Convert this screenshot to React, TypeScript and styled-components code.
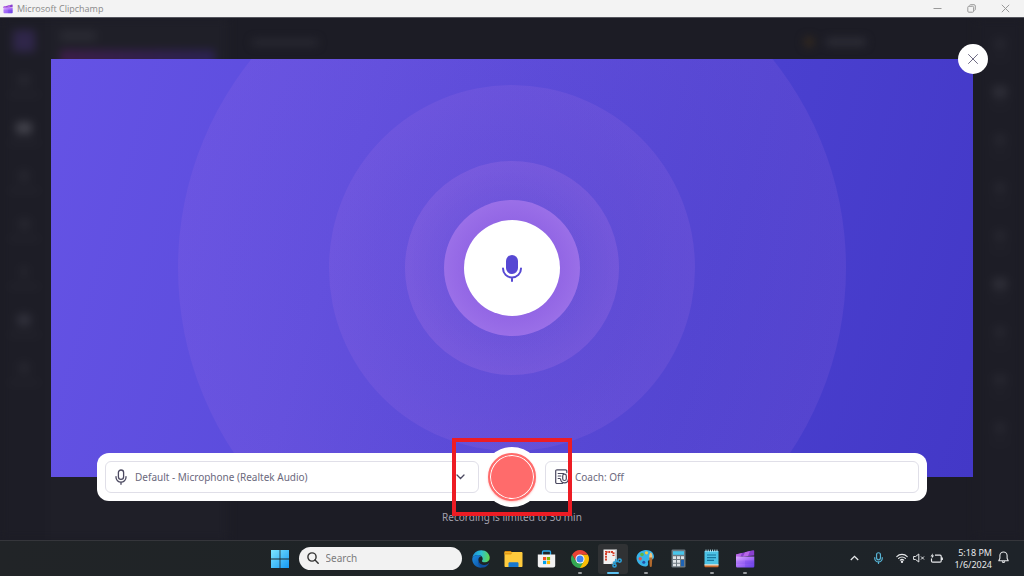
import React from "react";
import styled, { createGlobalStyle } from "styled-components";

const GlobalStyle = createGlobalStyle`
  *, *::before, *::after { box-sizing: border-box; }
  body { margin: 0; background: #1d1d26; }
  body, button, input, select { font-family: "Noto Sans", "Open Sans", sans-serif; }
  button { border: 0; padding: 0; background: none; cursor: pointer; }
  svg { display: block; }
`;

const Page = styled.div`
  min-height: 100vh;
  display: grid;
  grid-template-rows: auto 1fr auto;
`;

/* Title bar */

const TitleBar = styled.header`
  height: 18px;
  padding: 0 2px 0 3px;
  display: flex;
  align-items: center;
  gap: 4px;
  background: #f3f3f3;
  border-bottom: 1px solid #55565e;
`;

const AppName = styled.h1`
  margin: 0;
  flex: 1;
  font-family: "Open Sans", "Noto Sans", sans-serif;
  font-size: 9px;
  line-height: 16px;
  font-weight: 400;
  color: #8a8a8a;
`;

const WindowControls = styled.div`
  display: flex;
`;

const WindowButton = styled.button`
  width: 34px;
  height: 16px;
  display: grid;
  place-items: center;
  color: #999;
`;

/* Dimmed editor behind the dialog */

const Workspace = styled.div`
  display: grid;
  grid-template: minmax(0, 1fr) / minmax(0, 1fr);
  background: #1c1c25;
  overflow: hidden;
`;

const Editor = styled.div`
  grid-area: 1 / 1;
  display: grid;
  grid-template-columns: 48px 180px 1fr 48px;
  filter: blur(4px);
`;

const Rail = styled.div`
  padding-top: 12px;
  display: flex;
  flex-direction: column;
  align-items: center;
  background: #1d1d26;
`;

const RailItems = styled.div<{ $top?: number }>`
  padding-top: ${(p) => p.$top ?? 0}px;
`;

const RailItem = styled.div`
  height: 48px;
  padding-top: 8px;
  display: flex;
  flex-direction: column;
  align-items: center;
  gap: 6px;
`;

const Blob = styled.div<{ $w: number; $h: number; $c?: string }>`
  width: ${(p) => p.$w}px;
  height: ${(p) => p.$h}px;
  border-radius: 3px;
  background: ${(p) => p.$c ?? "#25252e"};
`;

const EditorPanel = styled.div`
  padding: 13px 12px;
  display: flex;
  flex-direction: column;
  gap: 9px;
  background: #1f1f28;
`;

const EditorTop = styled.div`
  height: 48px;
  padding: 0 110px 0 24px;
  display: flex;
  align-items: center;
  gap: 12px;
`;

const Spacer = styled.div`
  flex: 1;
`;

/* Recording dialog */

const Recorder = styled.main`
  grid-area: 1 / 1;
  z-index: 1;
  padding: 41px 51px 0;
  display: flex;
  flex-direction: column;
`;

const Stage = styled.section`
  position: relative;
  flex: 1;
  min-height: 240px;
  display: grid;
  place-items: center;
  background: linear-gradient(106deg, #6553e5 0%, #5b4cdc 32%, #4a40cf 70%, #4338c7 100%);
`;

const Rings = styled.svg`
  position: absolute;
  inset: 0;
  width: 100%;
  height: 100%;
`;

const MicBadge = styled.div`
  position: relative;
  width: 96px;
  height: 96px;
  border-radius: 50%;
  display: grid;
  place-items: center;
  background: #fff;
  color: #5648d3;
`;

const CloseButton = styled.button`
  position: absolute;
  top: -15px;
  right: -15px;
  width: 30px;
  height: 30px;
  border-radius: 50%;
  display: grid;
  place-items: center;
  background: #fff;
  color: #6f6c84;
`;

const ControlBar = styled.form`
  position: relative;
  z-index: 1;
  margin: -24px 46px 0;
  padding: 8px;
  display: flex;
  align-items: center;
  background: #fff;
  border-radius: 12px;
`;

const Field = styled.div<{ $gap: number }>`
  flex: 1;
  min-width: 0;
  height: 32px;
  padding: 0 13px 0 9px;
  display: flex;
  align-items: center;
  gap: ${(p) => p.$gap}px;
  border: 1px solid #e0dfe8;
  border-radius: 6px;
  color: #4b4960;
`;

const DeviceSelect = styled.select`
  flex: 1;
  min-width: 0;
  height: 30px;
  padding: 0;
  border: 0;
  appearance: none;
  background: none;
  font-size: 10px;
  color: #6b697d;
`;

const CoachButton = styled.button`
  flex: 1;
  height: 30px;
  text-align: left;
  font-size: 10px;
  color: #6b697d;
`;

const RecordSlot = styled.div`
  position: relative;
  width: 60px;
  height: 60px;
  margin: -14px 3px;
  border-radius: 50%;
  display: grid;
  place-items: center;
  background: #fff;
`;

const RecordButton = styled.button`
  width: 48px;
  height: 48px;
  border: 2px solid #ff6b6b;
  border-radius: 50%;
  background: #ff6b6b;
  box-shadow: inset 0 0 0 1px #fff, 0 1px 2px #ff6b6b66;
`;

const Highlight = styled.div`
  position: absolute;
  inset: -9px -30px;
  border: 4px solid #ed1c24;
  pointer-events: none;
`;

const Hint = styled.p`
  margin: 9px 0 16px;
  text-align: center;
  font-size: 10px;
  line-height: 14px;
  color: #a3a1ad;
`;

/* Taskbar */

const Taskbar = styled.footer`
  height: 36px;
  display: grid;
  grid-template-columns: 1fr auto 1fr;
  align-items: center;
  background: linear-gradient(90deg, #212427, #1e2426 50%, #1e2329);
  border-top: 1px solid #35363b;
`;

const Dock = styled.nav`
  grid-column: 2;
  display: flex;
  align-items: center;
  gap: 4px;
`;

const Apps = styled.div`
  display: flex;
  gap: 3px;
`;

const AppButton = styled.button<{ $state?: "open" | "active" }>`
  position: relative;
  width: 30px;
  height: 30px;
  display: grid;
  place-items: center;
  border-radius: 3px;
  background: ${(p) => (p.$state === "active" ? "#303234" : "none")};

  &::after {
    content: "";
    position: absolute;
    bottom: 0;
    left: 50%;
    transform: translateX(-50%);
    height: 2px;
    border-radius: 1px;
    width: ${(p) => (p.$state === "active" ? 12 : p.$state ? 4 : 0)}px;
    background: ${(p) => (p.$state === "active" ? "#5bc0f0" : "#9a9da0")};
  }
`;

const SearchBox = styled.label`
  width: 163px;
  height: 23px;
  padding: 0 8px 1px;
  display: flex;
  align-items: center;
  gap: 7px;
  border-radius: 12px;
  background: #f2f2f2;
  color: #333;
`;

const SearchInput = styled.input`
  flex: 1;
  min-width: 0;
  padding: 0;
  border: 0;
  background: none;
  font-size: 10px;
  color: #333;
  &::placeholder { color: #7c7c7c; opacity: 1; }
`;

const Tray = styled.div`
  justify-self: end;
  padding-right: 15px;
  display: flex;
  align-items: center;
  gap: 5px;
  color: #e6e8ea;
`;

const TrayButton = styled.button<{ $w?: number; $color?: string }>`
  width: ${(p) => p.$w ?? 12}px;
  height: 24px;
  padding-bottom: 2px;
  display: grid;
  place-items: center;
  color: ${(p) => p.$color ?? "inherit"};
`;

const Clock = styled.time`
  min-width: 45px;
  text-align: right;
  font-size: 9px;
  line-height: 12px;
`;

/* Drawings */

const ClipchampLogo = ({ size, id }: { size: number; id: string }) => (
  <svg width={size} height={size} viewBox="0 0 20 20">
    <defs>
      <linearGradient id={id} x1="0" y1="0" x2="1" y2="1">
        <stop offset="0" stopColor="#dba8ff" />
        <stop offset=".5" stopColor="#a66cf8" />
        <stop offset="1" stopColor="#6a45ea" />
      </linearGradient>
    </defs>
    <path d="M1 5.500 18 1.200c.8-.2 1.200.2 1.200.9V6.500L1 8z" fill="#8a3fcf" />
    <path d="M1.600 5.200 7 4 5.500 7.500 1 8V6c0-.4.200-.7.600-.8zM10 3.200l5-1.300-2 5-5 .5z" fill="#b867e6" />
    <path d="M1 7.500h18.300V17c0 1-.6 1.600-1.600 1.600H2.600C1.600 18.600 1 18 1 17z" fill={`url(#${id})`} />
    <path d="M1 11.500h18.300v3.500H1z" fill="#5a2fe0" opacity=".15" />
    <path d="M10 11.500h9.300v7.100H10z" fill="#4b22d0" opacity=".15" />
  </svg>
);

const MicOutline = ({ w, h, stroke = 1.3 }: { w: number; h: number; stroke?: number }) => (
  <svg width={w} height={h} viewBox="0 0 12 16" fill="none" stroke="currentColor" strokeWidth={stroke} strokeLinecap="round">
    <rect x="3.400" y="1" width="5.200" height="9.400" rx="2.600" />
    <path d="M1 7.600v.6a5 5 0 0 0 10 0v-.6M6 13.200V15.300" />
  </svg>
);

const StartIcon = () => (
  <svg width="18" height="18" viewBox="0 0 18 18">
    <defs>
      <linearGradient id="win" x1="0" y1="0" x2="1" y2="1">
        <stop offset="0" stopColor="#7ee6ff" />
        <stop offset="1" stopColor="#1597f2" />
      </linearGradient>
    </defs>
    <path d="M0 0h8.600v8.600H0zM9.400 0H18v8.600H9.400zM0 9.400h8.600V18H0zM9.400 9.400H18V18H9.400z" fill="url(#win)" />
  </svg>
);

const EdgeIcon = () => (
  <svg width="18" height="18" viewBox="0 0 20 20">
    <defs>
      <linearGradient id="edgeTop" x1="0" y1=".3" x2="1" y2=".4">
        <stop offset="0" stopColor="#1b8fdc" />
        <stop offset=".5" stopColor="#2cc0d0" />
        <stop offset="1" stopColor="#62d84e" />
      </linearGradient>
      <linearGradient id="edgeLow" x1="0" y1="0" x2="1" y2="1">
        <stop offset="0" stopColor="#1a8be0" />
        <stop offset="1" stopColor="#0c4a9c" />
      </linearGradient>
    </defs>
    <path d="M.4 9C1.200 3.600 5.300.3 10.200.3c5.600 0 9.500 4 9.500 8.300 0 3.200-2.300 5-5.100 5-2.300 0-3.600-.7-3.600-1.500 0-.6.9-.9.9-2.500C11.900 7.400 9.700 5.600 7 5.600 4 5.600 1.500 7 .4 9z" fill="url(#edgeTop)" />
    <path d="M.3 9.500c1-2.500 3.400-3.900 6.300-3.900 1.600 0 3 .5 3.900 1.400-2 .3-3.700 2.200-3.700 4.700 0 3.600 3.200 6.300 7 6.100-1.200 1-2.600 1.800-4.200 1.800C4.300 19.600-.2 15 .3 9.500z" fill="url(#edgeLow)" />
    <path d="M8 9.500c-1.800 3.700 1.500 7.600 5.800 7.100 2-.2 3.500-1 4.600-2 .3-.2.6 0 .4.400-1.300 2.600-3.600 4.400-6.300 4.500C7.500 19.300 4.900 13 8 9.500z" fill="#0f4f9f" />
  </svg>
);

const FolderIcon = () => (
  <svg width="19" height="18" viewBox="0 0 19 18">
    <path d="M.5 2c0-.6.4-1 1-1h5.200l1.800 2H.5z" fill="#d98a0c" />
    <path d="M.5 3.200C.5 2.500 1 2 1.600 2h15.800c.6 0 1.100.5 1.100 1.200V16c0 .6-.5 1-1.100 1H1.600c-.6 0-1.100-.4-1.100-1z" fill="#ffcb3d" />
    <path d="M.5 2.500h8l-1.500 2H.5z" fill="#e39b16" />
    <path d="M4.500 17v-3.500c0-.8.500-1.300 1.300-1.300h7.400c.8 0 1.300.5 1.300 1.300V17z" fill="#1878cf" />
  </svg>
);

const StoreIcon = () => (
  <svg width="19" height="18" viewBox="0 0 19 18">
    <path d="M5.500 5V2c0-.6.400-1 1-1h6c.6 0 1 .4 1 1v3" fill="none" stroke="#29a9ea" strokeWidth="1.300" />
    <path d="M.8 4.500h17.400v11c0 1.200-.8 2-2 2H2.800c-1.200 0-2-.8-2-2z" fill="#f2f2f2" />
    <path d="M6 7h3.200v3.200H6z" fill="#f25022" />
    <path d="M9.900 7h3.200v3.200H9.900z" fill="#7fba00" />
    <path d="M6 10.900h3.200v3.200H6z" fill="#00a4ef" />
    <path d="M9.900 10.900h3.200v3.200H9.900z" fill="#ffb900" />
  </svg>
);

const ChromeIcon = () => (
  <svg width="18" height="18" viewBox="0 0 20 20">
    <path d="M10 10V5h8.660A10 10 0 0 1 10 20z" fill="#fbbc05" />
    <path d="m10 10 4.330 2.500L10 20A10 10 0 0 1 1.340 5l4.330 7.500z" fill="#34a853" />
    <path d="M10 5h8.660A10 10 0 0 0 1.340 5l4.330 7.500z" fill="#e94235" />
    <circle cx="10" cy="10" r="5" fill="#fff" />
    <circle cx="10" cy="10" r="3.900" fill="#3f83f0" />
  </svg>
);

const SnipIcon = () => (
  <svg width="19" height="19" viewBox="0 0 19 19">
    <path d="M.5.5h13v10L9.500 15h-9z" fill="#f1f1f1" />
    <path d="M3 11.500V3h7.500v4" fill="none" stroke="#d5402b" strokeWidth="2" strokeDasharray="2 .7" />
    <path d="m13.300.5-.2 11.500M8.500 15l5-3.500" stroke="#b4bbc0" strokeWidth="1.500" />
    <circle cx="11.500" cy="16.500" r="1.600" fill="none" stroke="#2ba3dc" strokeWidth="1.500" />
    <circle cx="16.600" cy="11.600" r="1.600" fill="none" stroke="#2ba3dc" strokeWidth="1.500" />
    <path d="m12.800 10-.8 4.900M15 12.300l-5 1.200" stroke="#2ba3dc" strokeWidth="1.400" />
  </svg>
);

const PaintIcon = () => (
  <svg width="19" height="19" viewBox="0 0 19 19">
    <path d="M8 1.200C13 0 18 3 18 7.500c0 3-2 3.300-4 3.500-1.800.2-2.400 1.200-2 2.800.4 1.900 0 3.400-2 3.600-5 .4-9.500-3.400-9.500-8.400C.5 5 3.800 2.200 8 1.200z" fill="#38b3e8" />
    <circle cx="4.200" cy="9.800" r="1.700" fill="#e2574c" />
    <circle cx="6" cy="5.500" r="1.800" fill="#5bb848" />
    <circle cx="10.500" cy="3.800" r="1.600" fill="#f7c93a" />
    <circle cx="7.800" cy="13.200" r="1.500" fill="#244fa5" />
    <path d="M13.200 6.500c0-1 1-2.500 1.600-3 .6.500 1.500 2 1.500 3v3h-3.100z" fill="#f3c47e" />
    <path d="M13.200 8.600h3.100l-.5 8.600c-.1 1-2 1-2.100 0z" fill="#b26a2e" />
  </svg>
);

const CalculatorIcon = () => (
  <svg width="15" height="19" viewBox="0 0 15 19">
    <rect x=".5" y=".5" width="14" height="18" rx="1.300" fill="#6d7880" />
    <path d="M2 2.200h11v3.600H2z" fill="#48c5ea" />
    <path d="M2 7.300h3V10H2zM6 7.300h3V10H6zM10 7.300h3V10h-3zM2 11h3v2.700H2zM6 11h3v2.700H6zM2 14.700h3v2.500H2zM6 14.700h3v2.500H6z" fill="#dfe4e8" />
    <path d="M10 11h3v6.200h-3z" fill="#1c62b5" />
  </svg>
);

const NotepadIcon = () => (
  <svg width="15" height="19" viewBox="0 0 15 19">
    <path d="M.5 2h14v14H.5z" fill="#4cc2e4" />
    <path d="M.5 16h14v1.500c0 .5-.3.800-.8.800H1.300c-.5 0-.8-.3-.8-.8z" fill="#c7692c" />
    <path d="M.5 15.300h14v1.200H.5z" fill="#f3e3cf" />
    <path d="M2 .6v2.400M4.200.6v2.400M6.400.6v2.400M8.600.6v2.400M10.800.6v2.400M13 .6v2.400" stroke="#b9e8f5" strokeWidth="1" />
    <path d="M3 6h9M3 8.700h9M3 11.400h7" stroke="#17749c" strokeWidth="1.200" />
  </svg>
);

const CoachIcon = () => (
  <svg width="14" height="16" viewBox="0 0 14 16" fill="none" stroke="currentColor" strokeWidth="1.200" strokeLinecap="round" strokeLinejoin="round">
    <path d="M7.500 14.500H2A1.300 1.300 0 0 1 .7 13.200V2.100A1.300 1.300 0 0 1 2 .8h8.500a1.300 1.300 0 0 1 1.300 1.300v1.500M3.200 4.500h5.500M3.200 7h2.600M3.200 9.500H5" />
    <rect x="7.700" y="5.200" width="3.600" height="6.300" rx="1.800" />
    <path d="M5.600 10.200c.2 2.200 1.800 3.600 3.900 3.600s3.700-1.400 3.900-3.600" />
  </svg>
);

/* Each ring is a little denser at its rim than at its centre. */
const rings = [
  { id: "ring1", r: 334, color: "#ab75e5", inner: 0.08, outer: 0.14 },
  { id: "ring2", r: 183, color: "#ab75e5", inner: 0.1, outer: 0.16 },
  { id: "ring3", r: 107, color: "#ab75e5", inner: 0.1, outer: 0.26 },
  { id: "ring4", r: 68, color: "#b57bea", inner: 0.3, outer: 0.6 },
];

const leftRail = [14, 16, 12, 13, 8, 14, 12];
const rightRail = [12, 14, 12, 12, 12, 14, 12, 14, 12];

const taskbarApps: { name: string; icon: React.ReactNode; state?: "open" | "active" }[] = [
  { name: "Edge", icon: <EdgeIcon /> },
  { name: "File Explorer", icon: <FolderIcon /> },
  { name: "Store", icon: <StoreIcon /> },
  { name: "Chrome", icon: <ChromeIcon />, state: "open" },
  { name: "Snipping Tool", icon: <SnipIcon />, state: "active" },
  { name: "Paint", icon: <PaintIcon />, state: "open" },
  { name: "Calculator", icon: <CalculatorIcon /> },
  { name: "Notepad", icon: <NotepadIcon />, state: "open" },
  { name: "Clipchamp", icon: <ClipchampLogo size={20} id="clipTask" />, state: "open" },
];

export default function App() {
  return (
    <Page>
      <GlobalStyle />
      <TitleBar>
        <ClipchampLogo size={10} id="clipTitle" />
        <AppName>Microsoft Clipchamp</AppName>
        <WindowControls>
          <WindowButton aria-label="Minimize">
            <svg width="9" height="9" viewBox="0 0 9 9" stroke="currentColor"><path d="M.5 4.500h8" /></svg>
          </WindowButton>
          <WindowButton aria-label="Restore">
            <svg width="9" height="9" viewBox="0 0 9 9" fill="none" stroke="currentColor">
              <rect x=".8" y="2.300" width="5.800" height="5.900" rx="1" />
              <path d="M2.500 1.500c.2-.5.500-.8 1-.8H7a1.300 1.300 0 0 1 1.300 1.300v3.300c0 .6-.3 1-.8 1.200" />
            </svg>
          </WindowButton>
          <WindowButton aria-label="Close window">
            <svg width="9" height="9" viewBox="0 0 9 9" stroke="currentColor"><path d="m.8.8 7.400 7.400M8.200.8.800 8.200" /></svg>
          </WindowButton>
        </WindowControls>
      </TitleBar>

      <Workspace>
        <Editor aria-hidden="true">
          <Rail>
            <Blob $w={22} $h={22} $c="#2f2649" />
            <RailItems $top={14}>
              {leftRail.map((w, i) => (
                <RailItem key={i}>
                  <Blob $w={w} $h={12} $c={i === 1 ? "#42424b" : i === 5 ? "#30303a" : undefined} />
                  <Blob $w={32} $h={5} $c="#22222b" />
                </RailItem>
              ))}
            </RailItems>
          </Rail>
          <EditorPanel>
            <Blob $w={36} $h={10} $c="#2a2a33" />
            <Blob $w={155} $h={22} $c="linear-gradient(90deg, #3b1e47, #2b2250)" />
          </EditorPanel>
          <div>
            <EditorTop>
              <Blob $w={66} $h={7} $c="#292932" />
              <Spacer />
              <Blob $w={10} $h={10} $c="#33291f" />
              <Blob $w={40} $h={8} $c="#2d2d36" />
            </EditorTop>
          </div>
          <Rail>
            <RailItems>
              {rightRail.map((w, i) => (
                <RailItem key={i}>
                  <Blob $w={w} $h={12} $c={i === 1 || i === 5 ? "#2e2e37" : undefined} />
                  <Blob $w={20} $h={4} $c="#21212a" />
                </RailItem>
              ))}
            </RailItems>
          </Rail>
        </Editor>

        <Recorder>
          <Stage aria-label="Audio recording">
            <Rings>
              <defs>
                {rings.map((g) => (
                  <radialGradient key={g.id} id={g.id}>
                    <stop offset=".4" stopColor={g.color} stopOpacity={g.inner} />
                    <stop offset="1" stopColor={g.color} stopOpacity={g.outer} />
                  </radialGradient>
                ))}
                <radialGradient id="glow">
                  <stop offset=".5" stopColor="#9a66e6" stopOpacity=".75" />
                  <stop offset="1" stopColor="#a274ea" stopOpacity=".85" />
                </radialGradient>
              </defs>
              {rings.slice(0, 3).map((g) => (
                <circle key={g.id} cx="50%" cy="50%" r={g.r} fill={`url(#${g.id})`} />
              ))}
              <circle cx="50%" cy="50%" r="68" fill="url(#glow)" />
            </Rings>
            <MicBadge>
              <svg width="20" height="28" viewBox="0 0 20 28" fill="none" stroke="currentColor" strokeWidth="2" strokeLinecap="round">
                <rect x="4" y="1" width="12" height="19" rx="6" fill="currentColor" stroke="none" />
                <path d="M1 14.500a9 9 0 0 0 18 0M10 24v3" />
              </svg>
            </MicBadge>
            <CloseButton aria-label="Close">
              <svg width="10" height="10" viewBox="0 0 10 10" stroke="currentColor" strokeLinecap="round"><path d="m.5.5 9 9M9.500.5l-9 9" /></svg>
            </CloseButton>
          </Stage>

          <ControlBar onSubmit={(e) => e.preventDefault()}>
            <Field $gap={8}>
              <MicOutline w={12} h={16} />
              <DeviceSelect aria-label="Microphone">
                <option>Default - Microphone (Realtek Audio)</option>
              </DeviceSelect>
              <svg width="9" height="6" viewBox="0 0 9 6" fill="none" stroke="currentColor" strokeWidth="1.300" strokeLinecap="round"><path d="m1 1 3.500 3.500L8 1" /></svg>
            </Field>
            <RecordSlot>
              <RecordButton type="button" aria-label="Start recording" />
              <Highlight />
            </RecordSlot>
            <Field $gap={6}>
              <CoachIcon />
              <CoachButton type="button">Coach: Off</CoachButton>
            </Field>
          </ControlBar>
          <Hint>Recording is limited to 30 min</Hint>
        </Recorder>
      </Workspace>

      <Taskbar>
        <Dock aria-label="Taskbar">
          <AppButton aria-label="Start"><StartIcon /></AppButton>
          <SearchBox>
            <svg width="12" height="12" viewBox="0 0 12 12" fill="none" stroke="currentColor" strokeWidth="1.400" strokeLinecap="round"><circle cx="5" cy="5" r="4.100" /><path d="m8 8 3.200 3.200" /></svg>
            <SearchInput type="text" placeholder="Search" aria-label="Search" />
          </SearchBox>
          <Apps>
            {taskbarApps.map((a) => (
              <AppButton key={a.name} aria-label={a.name} $state={a.state}>{a.icon}</AppButton>
            ))}
          </Apps>
        </Dock>
        <Tray>
          <TrayButton aria-label="Show hidden icons">
            <svg width="9" height="6" viewBox="0 0 9 6" fill="none" stroke="currentColor" strokeWidth="1.300"><path d="m.8 5 3.700-3.700L8.200 5" /></svg>
          </TrayButton>
          <TrayButton $w={26} $color="#58b5d6" aria-label="Microphone in use">
            <MicOutline w={9} h={12} stroke={1.6} />
          </TrayButton>
          <TrayButton aria-label="Network">
            <svg width="12" height="10" viewBox="0 0 12 10" fill="none" stroke="currentColor" strokeWidth="1.200" strokeLinecap="round">
              <path d="M.8 3.600a7.300 7.300 0 0 1 10.400 0M2.600 5.400a4.800 4.800 0 0 1 6.800 0M4.300 7.100a2.400 2.400 0 0 1 3.400 0" />
              <circle cx="6" cy="8.700" r=".6" fill="currentColor" />
            </svg>
          </TrayButton>
          <TrayButton aria-label="Volume muted">
            <svg width="12" height="10" viewBox="0 0 12 10" fill="none" stroke="currentColor" strokeWidth="1" strokeLinejoin="round">
              <path d="M.6 3.500h2L5.800 1v8L2.600 6.500h-2zM8 3.500l3 3M11 3.500l-3 3" />
            </svg>
          </TrayButton>
          <TrayButton aria-label="Battery">
            <svg width="13" height="10" viewBox="0 0 13 10" fill="none" stroke="currentColor" strokeWidth="1.200" strokeLinejoin="round">
              <path d="M5 2.200h5c.7 0 1.200.5 1.200 1.200V8c0 .7-.5 1.200-1.200 1.200H2.700C2 9.200 1.500 8.700 1.500 8V5.500M12.300 4.500v2.400" />
              <path d="M2.800.3.500 3.500h1.600l-.6 2.200L4.200 2.500H2.600z" fill="currentColor" stroke="none" />
            </svg>
          </TrayButton>
          <Clock dateTime="2024-01-06T17:18">5:18 PM<br />1/6/2024</Clock>
          <TrayButton aria-label="Notifications">
            <svg width="11" height="13" viewBox="0 0 11 13" fill="none" stroke="currentColor" strokeWidth="1.100" strokeLinejoin="round">
              <path d="M5.500 1a3.600 3.600 0 0 0-3.600 3.600v2.700L.8 9.700h9.400L9.100 7.300V4.600A3.600 3.600 0 0 0 5.500 1zM4.200 10.500a1.400 1.400 0 0 0 2.600 0" />
            </svg>
          </TrayButton>
        </Tray>
      </Taskbar>
    </Page>
  );
}
